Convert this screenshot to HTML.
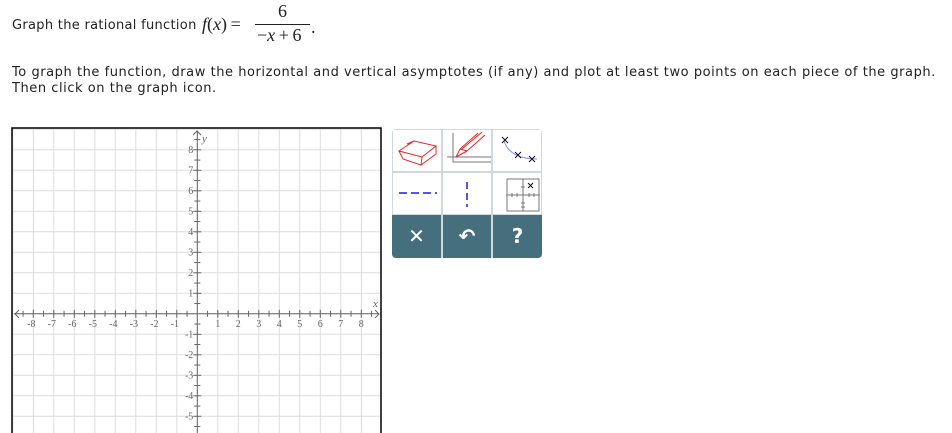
<!DOCTYPE html>
<html><head><meta charset="utf-8"><style>
body{margin:0;width:952px;height:433px;overflow:hidden;background:#fff;font-family:"DejaVu Sans","Liberation Sans",sans-serif;font-size:13px;color:#222}
.t{position:absolute;white-space:nowrap;letter-spacing:0.55px}
.m{font-family:"Liberation Serif",serif;font-size:18px;letter-spacing:0}
#pn{position:absolute;left:392px;top:129px;width:150px;height:129px;border-radius:4px;overflow:hidden;background:#cfd8dc}
.c{position:absolute;background:#fff}
.d{position:absolute;background:#456f7c;color:#fff;text-align:center;font-size:20px;font-weight:bold}
</style></head><body>
<div class="t" style="left:12px;top:18px;letter-spacing:0.3px">Graph the rational function</div>
<div class="t m" style="left:202px;top:14px"><i>f</i>(<i>x</i>)&thinsp;=</div>
<div class="t m" style="left:278px;top:1px">6</div>
<div style="position:absolute;left:255px;top:24px;width:55px;height:1px;background:#222"></div>
<div class="t m" style="left:257px;top:25px">−<i>x</i>&thinsp;+&thinsp;6</div>
<div class="t m" style="left:311px;top:17px">.</div>
<div class="t" style="left:12px;top:65px">To graph the function, draw the horizontal and vertical asymptotes (if any) and plot at least two points on each piece of the graph.</div>
<div class="t" style="left:12px;top:81px">Then click on the graph icon.</div>
<svg id="g" style="position:absolute;left:0;top:0" width="952" height="433"></svg>
<div id="pn">
<div class="c" style="left:1px;top:1px;width:48px;height:41px"></div>
<div class="c" style="left:51px;top:1px;width:48px;height:41px"></div>
<div class="c" style="left:101px;top:1px;width:48px;height:41px"></div>
<div class="c" style="left:1px;top:44px;width:48px;height:41px"></div>
<div class="c" style="left:51px;top:44px;width:48px;height:41px"></div>
<div class="c" style="left:101px;top:44px;width:48px;height:41px"></div>
<div class="d" style="left:0;top:86px;width:49px;height:43px;line-height:43px">✕</div>
<div class="d" style="left:51px;top:86px;width:48px;height:43px;line-height:43px">↶</div>
<div class="d" style="left:101px;top:86px;width:49px;height:43px;line-height:43px">?</div>
<svg style="position:absolute;left:0;top:0" width="150" height="129" fill="none">
<path d="M7 22 L22 12 L44 17 L30 28 Z M7 22 L11 30 L29 36 L30 28 M29 36 L44 25 L44 17 M15 15 L22 12" stroke="#e22" stroke-width="1"/>
<path d="M61 4 V33 H99 M55 28 H99" stroke="#777"/>
<path d="M64 28 L68 20 L86 4 M68 20 L75 22 L93 6 M64 28 L75 22 M70 20 L90 3" stroke="#e22"/>
<path d="M112 12 Q118 30 145 30" stroke="#88f"/>
<path d="M110 8 l6 6 m0 -6 l-6 6 M123 23 l6 6 m0 -6 l-6 6 M137 27 l6 6 m0 -6 l-6 6" stroke="#111"/>
<path d="M7 64 H45" stroke="#55e" stroke-width="2" stroke-dasharray="8 4"/>
<path d="M75 53 V78" stroke="#55e" stroke-width="2" stroke-dasharray="7 4"/>
<path d="M115 50 H147 V82 H115 Z M114 66 H148 M131 50 V82" stroke="#777"/>
<path d="M120 64 v4 M125 64 v4 M137 64 v4 M142 64 v4 M129 58 h4 M129 74 h4 M129 78 h4" stroke="#777"/>
<path d="M136 54 l5 5 m0 -5 l-5 5" stroke="#111"/>
</svg>
</div>
<script>
var s='',ox=197.3,oy=313.8,k=20.5,L=12,T=128,R=381;
for(var i=-9;i<=9;i++){var x=ox+i*k;if(x>L&&x<R)s+='<line x1="'+x+'" y1="'+T+'" x2="'+x+'" y2="433" stroke="#ddd"/>';}
for(var j=-6;j<=9;j++){var y=oy-j*k;if(y>T&&y<433)s+='<line x1="'+L+'" y1="'+y+'" x2="'+R+'" y2="'+y+'" stroke="#ddd"/>';}
s+='<rect x="'+L+'" y="'+T+'" width="'+(R-L)+'" height="320" fill="none" stroke="#000" stroke-width="1.5"/>';
s+='<line x1="14" y1="'+oy+'" x2="379" y2="'+oy+'" stroke="#666"/><line x1="'+ox+'" y1="131" x2="'+ox+'" y2="433" stroke="#666"/>';
s+='<path d="M19 310 l-4 4 l4 4 M375 310 l4 4 l-4 4 M193 135 l4 -4 l4 4" stroke="#666" fill="none"/>';
for(var i=-17;i<=17;i++){if(!i)continue;var x=ox+i*k/2;var h=i%2?3:4;s+='<line x1="'+x+'" y1="'+(oy-h)+'" x2="'+x+'" y2="'+(oy+h)+'" stroke="#666"/>';
if(i%2==0&&Math.abs(i)<=16)s+='<text x="'+(x+(i<0?-2:0))+'" y="'+(oy+13)+'" font-family="Liberation Serif" font-size="10" fill="#666" text-anchor="middle">'+(i/2)+'</text>';}
for(var j=-12;j<=17;j++){if(!j)continue;var y=oy-j*k/2;var h=j%2?3:4;s+='<line x1="'+(ox-h)+'" y1="'+y+'" x2="'+(ox+h)+'" y2="'+y+'" stroke="#666"/>';
if(j%2==0&&j<=16)s+='<text x="'+(ox-4)+'" y="'+(y+3)+'" font-family="Liberation Serif" font-size="10" fill="#666" text-anchor="end">'+(j/2)+'</text>';}
s+='<text x="373" y="307" font-family="Liberation Serif" font-style="italic" font-size="11" fill="#666">x</text><text x="202" y="142" font-family="Liberation Serif" font-style="italic" font-size="11" fill="#666">y</text>';
document.getElementById('g').innerHTML=s;
</script>
</body></html>
